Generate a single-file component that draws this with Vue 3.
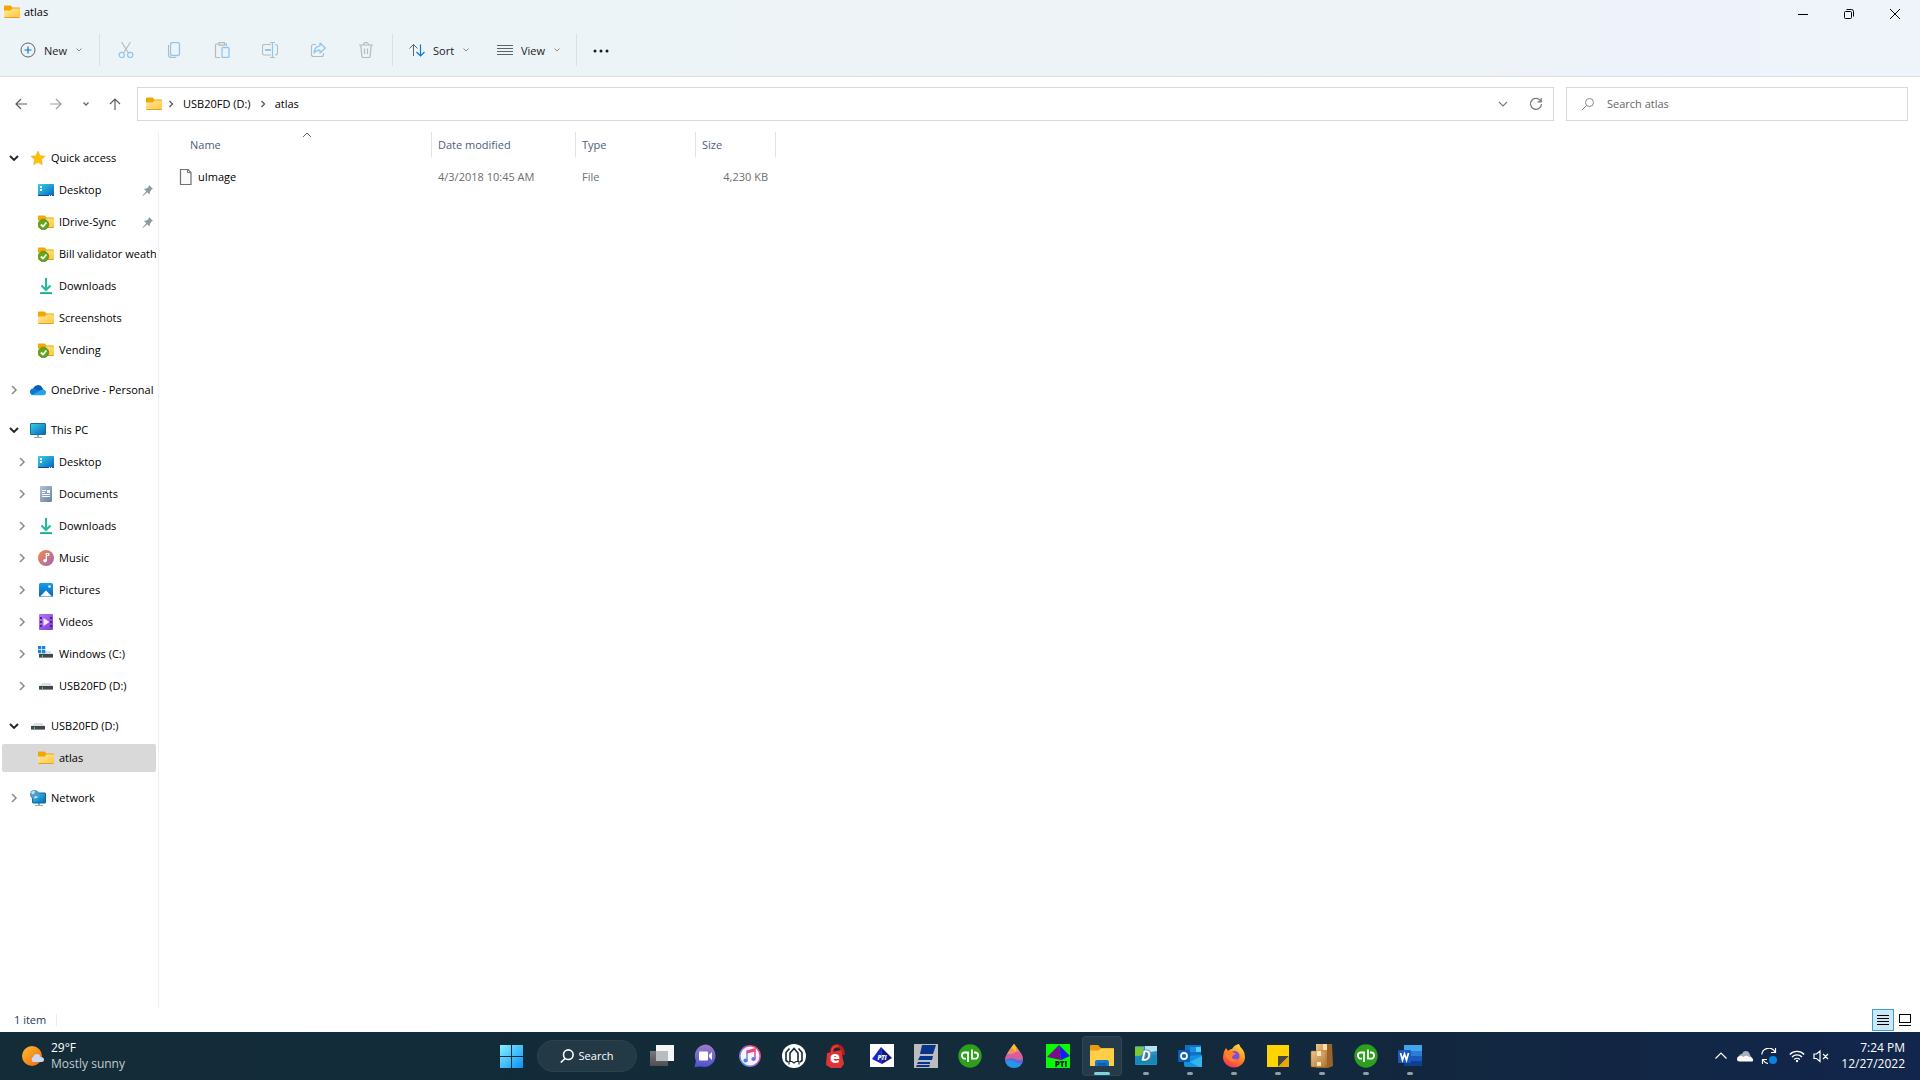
<script setup>
const quick = [
  { icon: 'desktop', label: 'Desktop', pinned: true },
  { icon: 'foldersync', label: 'IDrive-Sync', pinned: true },
  { icon: 'foldersync', label: 'Bill validator weath' },
  { icon: 'download', label: 'Downloads' },
  { icon: 'folder', label: 'Screenshots' },
  { icon: 'foldersync', label: 'Vending' },
]
const pc = [
  { icon: 'desktop', label: 'Desktop', arrow: true },
  { icon: 'document', label: 'Documents', arrow: true },
  { icon: 'download', label: 'Downloads', arrow: true },
  { icon: 'music', label: 'Music', arrow: true },
  { icon: 'picture', label: 'Pictures', arrow: true },
  { icon: 'video', label: 'Videos', arrow: true },
  { icon: 'windrive', label: 'Windows (C:)', arrow: true },
  { icon: 'drive', label: 'USB20FD (D:)', arrow: true },
]
const tree = [
  { icon: 'star', label: 'Quick access', open: true, children: quick },
  { icon: 'onedrive', label: 'OneDrive - Personal', children: [] },
  { icon: 'pc', label: 'This PC', open: true, children: pc },
  { icon: 'drive', label: 'USB20FD (D:)', open: true, children: [{ icon: 'folder', label: 'atlas', selected: true }] },
  { icon: 'network', label: 'Network', children: [] },
]
const actions = ['Cut', 'Copy', 'Paste', 'Rename', 'Share', 'Delete']
const files = [{ name: 'uImage', date: '4/3/2018 10:45 AM', type: 'File', size: '4,230 KB' }]
const apps = [
  { id: 'taskview', name: 'Task view' },
  { id: 'chat', name: 'Chat' },
  { id: 'itunes', name: 'iTunes' },
  { id: 'arch', name: 'Home' },
  { id: 'elock', name: 'Lock', mark: { text: 'e', x: 9, y: 19, size: 16, fill: '#fff' } },
  { id: 'ptiwhite', name: 'PTI', mark: { text: 'PTI', x: 12, y: 16, size: 6, fill: '#fff', italic: true } },
  { id: 'bars', name: 'Bars' },
  { id: 'qb', name: 'QuickBooks' },
  { id: 'paint', name: 'Paint' },
  { id: 'ptigreen', name: 'PTI tools', mark: { text: 'PTI', x: 15, y: 23, size: 8, fill: '#031a03' } },
  { id: 'explorer', name: 'File Explorer', active: true },
  { id: 'dapp', name: 'D', running: true, mark: { text: 'D', x: 12, y: 17, size: 15, fill: '#fff', italic: true, stroke: '#17566d' } },
  { id: 'outlook', name: 'Outlook', running: true },
  { id: 'firefox', name: 'Firefox', running: true },
  { id: 'sticky', name: 'Sticky Notes', running: true },
  { id: 'boxes', name: 'Packages', running: true },
  { id: 'qb', name: 'QuickBooks Desktop', running: true },
  { id: 'word', name: 'Word', running: true },
]
</script>

<template>
  <svg class="sprite" aria-hidden="true">
    <defs>
      <linearGradient id="gFolder" x1="0" y1="0" x2="1" y2="1"><stop offset="0" stop-color="#ffe9a6" /><stop offset="1" stop-color="#ffc636" /></linearGradient>
      <linearGradient id="gBlue" x1="0" y1="0" x2="1" y2="1"><stop offset="0" stop-color="#35d3e6" /><stop offset="1" stop-color="#0a62bd" /></linearGradient>
      <linearGradient id="gDoc" x1="0" y1="0" x2="1" y2="1"><stop offset="0" stop-color="#b3c3d6" /><stop offset="1" stop-color="#6483a4" /></linearGradient>
      <linearGradient id="gDown" x1="0" y1="0" x2="0" y2="1"><stop offset="0" stop-color="#35cd90" /><stop offset="1" stop-color="#0fa49f" /></linearGradient>
      <linearGradient id="gMusic" x1="0" y1="0" x2="1" y2="1"><stop offset="0" stop-color="#f58a45" /><stop offset="1" stop-color="#a860b8" /></linearGradient>
      <linearGradient id="gPic" x1="0" y1="0" x2="0" y2="1"><stop offset="0" stop-color="#1b9de8" /><stop offset="1" stop-color="#0566bd" /></linearGradient>
      <linearGradient id="gVid" x1="0" y1="0" x2="1" y2="1"><stop offset="0" stop-color="#b878f5" /><stop offset="1" stop-color="#7c3bd6" /></linearGradient>
      <linearGradient id="gWin" x1="0" y1="0" x2="1" y2="1"><stop offset="0" stop-color="#86f1ff" /><stop offset="1" stop-color="#0a90f5" /></linearGradient>
      <linearGradient id="gChat" x1="0" y1="0" x2="0" y2="1"><stop offset="0" stop-color="#a07bc6" /><stop offset="1" stop-color="#4c54d2" /></linearGradient>
      <linearGradient id="gTunes" x1="1" y1="0" x2="0" y2="1"><stop offset="0" stop-color="#f9405c" /><stop offset="0.5" stop-color="#b858d8" /><stop offset="1" stop-color="#35a9f5" /></linearGradient>
      <linearGradient id="gSun" x1="0" y1="0" x2="1" y2="1"><stop offset="0" stop-color="#f8c030" /><stop offset="1" stop-color="#f2640c" /></linearGradient>
      <linearGradient id="gFire" x1="0.8" y1="0" x2="0.3" y2="1"><stop offset="0" stop-color="#ffe443" /><stop offset="0.5" stop-color="#ff8a1f" /><stop offset="1" stop-color="#f5305e" /></linearGradient>
      <linearGradient id="gBox" x1="0" y1="0" x2="1" y2="1"><stop offset="0" stop-color="#eec28a" /><stop offset="1" stop-color="#b07a35" /></linearGradient>
      <linearGradient id="gPane" x1="0" y1="0" x2="0" y2="1"><stop offset="0" stop-color="#767879" /><stop offset="1" stop-color="#4d4f50" /></linearGradient>
    </defs>

    <symbol id="folder" viewBox="0 0 16 16"><path d="M0 2.500Q0 1.500 1 1.500h5.500l2 2H15q1 0 1 1V7H0z" fill="#f0a800" /><path d="M0 6.500h6.500l2-2H15.500q.5 0 .5.500v8q0 1-1 1H1q-1 0-1-1z" fill="url(#gFolder)" /><path d="M.5 13.500h15" stroke="#e3a021" /></symbol>
    <symbol id="foldersync" viewBox="0 0 16 16"><use href="#folder" width="16" height="16" /><circle cx="5.500" cy="10.500" r="5.200" fill="#63a51e" stroke="#467f14" stroke-width=".6" /><path d="M2.800 10.500l2.200 2 3.400-4" fill="none" stroke="#fff" stroke-width="1.700" /></symbol>
    <symbol id="desktop" viewBox="0 0 16 16"><rect y="2" width="16" height="12" rx="1" fill="url(#gBlue)" /><path d="M0 13h16q0 1-1 1H1q-1 0-1-1z" fill="#0b4a92" /><path d="M2 4h2v2H2zM2 7h2v2H2z" fill="#fff" /><path d="M11 13h1v1h-1zM13 13h1v1h-1z" fill="#d8ecff" /></symbol>
    <symbol id="download" viewBox="0 0 16 16"><path d="M8 0v11.500M3.500 7.500L8 12l4.500-4.500" fill="none" stroke="#22b996" stroke-width="2" /><rect x="2" y="14" width="12" height="2" rx=".5" fill="url(#gDown)" /></symbol>
    <symbol id="star" viewBox="0 0 16 16"><path d="M8 1l2.100 4.700 5 .5-3.700 3.400 1 5.200L8 12.300l-4.400 2.500 1-5.200L.9 6.200l5-.5z" fill="#fcbf05" stroke="#f3a70a" stroke-width=".5" /></symbol>
    <symbol id="onedrive" viewBox="0 0 16 16"><path d="M3 7.500A5 5 0 0 1 12.500 6L14 9 5 11z" fill="#0a5cb0" /><path d="M0 10.200a3.500 3.500 0 0 1 5.500-3.200L13 10l-3 3H3.500A3 3 0 0 1 0 10.200z" fill="#0d78d2" /><path d="M2 12.900L11 8.100a3 3 0 0 1 5 2.400q0 2.500-3 2.700H3.500z" fill="#26a3ec" /></symbol>
    <symbol id="pc" viewBox="0 0 16 16"><path d="M7 13h2v2h3v1H4v-1h3z" fill="#9aa6b0" /><rect x=".5" y="1.500" width="15" height="11" rx=".5" fill="url(#gBlue)" stroke="#127099" /></symbol>
    <symbol id="document" viewBox="0 0 16 16"><rect x="2" width="12" height="16" rx="1" fill="url(#gDoc)" /><path d="M4 4.500h4M4 6.500h3M4 8.500h8M4 10.500h8" stroke="#fff" /><path d="M9 4h3v3H9z" fill="#fff" /></symbol>
    <symbol id="music" viewBox="0 0 16 16"><circle cx="8" cy="8" r="8" fill="url(#gMusic)" /><circle cx="7" cy="10.800" r="1.800" fill="#fff" /><path d="M8.300 11V3.500h2.400v2H8.300" fill="none" stroke="#fff" stroke-width="1.200" /></symbol>
    <symbol id="picture" viewBox="0 0 16 16"><rect x="1" y="1" width="14" height="14" rx="1.500" fill="url(#gPic)" /><path d="M2 14.500l6-6 6 6z" fill="#fff" /><circle cx="11.500" cy="4.500" r="1.300" fill="#fff" /></symbol>
    <symbol id="video" viewBox="0 0 16 16"><rect x="1" width="14" height="16" rx="1" fill="url(#gVid)" /><path d="M3 1v14M13 1v14" stroke="#4b238d" stroke-width="2" stroke-dasharray="2 2" stroke-dashoffset="-2" /><path d="M5.500 4l6 4-6 4z" fill="#f3eaff" /></symbol>
    <symbol id="drive" viewBox="0 0 16 16"><path d="M4 5h8l3 3.500H1z" fill="#dfe1e5" /><rect x="1" y="8" width="14" height="4" fill="#43474b" /><path d="M1 11.500h14" stroke="#8b8f93" /><path d="M4 9h1v2H4z" fill="#35e06a" /></symbol>
    <symbol id="windrive" viewBox="0 0 16 16"><path d="M8 5h4l3 3.500H1z" fill="#dfe1e5" /><rect x="1" y="8" width="14" height="4" fill="#43474b" /><path d="M1 11.500h14" stroke="#8b8f93" /><path d="M4 9h1v2H4z" fill="#35e06a" /><path d="M0 0h3.300v3.300H0zM4 0h3.300v3.300H4zM0 4h3.300v3.300H0zM4 4h3.300v3.300H4z" fill="#1683d8" /></symbol>
    <symbol id="network" viewBox="0 0 16 16"><path d="M8 13h2v2h3v1H5v-1h3z" fill="#9aa6b0" /><rect x="2.500" y="3" width="13" height="10" rx=".5" fill="url(#gBlue)" stroke="#0e6796" /><circle cx="4.500" cy="4.500" r="4.500" fill="#4f9cc4" /><path d="M1 3q2-3 4-2 0 3-2.500 3.500zM4 7q2-2 4 0-2 2-4 1z" fill="#b9e0ee" /></symbol>
    <symbol id="file" viewBox="0 0 16 18"><path d="M1.500 1.500h7.500l3 3v12H1.500z" fill="#fafafa" stroke="#70706e" stroke-width="1.200" /><path d="M8.500 1.500v3.200H12" fill="none" stroke="#70706e" /></symbol>
    <symbol id="pin" viewBox="0 0 12 12"><path d="M7 1l4 4-1.500.5L8 8l-.5 2.500-2.300-2.300L1 12l-.5-.5 3.700-4.200L2 5l2.500-.5L6.500 3z" fill="#8e99a6" /></symbol>

    <symbol id="Cut" viewBox="0 0 16 16"><path d="M3.500 0l7 11M12.500 0l-7 11" fill="none" stroke="#b4babd" stroke-width="1.100" /><circle cx="3.800" cy="13" r="2.600" fill="none" stroke="#92c6ec" stroke-width="1.300" /><circle cx="12.200" cy="13" r="2.600" fill="none" stroke="#92c6ec" stroke-width="1.300" /></symbol>
    <symbol id="Copy" viewBox="0 0 16 16"><path d="M2.500 3v9.500q0 3 3 3H10" fill="none" stroke="#b4babd" stroke-width="1.100" /><rect x="4.500" y=".5" width="9" height="13" rx="2" fill="none" stroke="#92c6ec" stroke-width="1.300" /></symbol>
    <symbol id="Paste" viewBox="0 0 16 16"><path d="M5 2H2.500Q1.500 2 1.500 3v11.500q0 1 1 1H6M10 2h2.500v2M5 .7h5.500v2.500H5z" fill="none" stroke="#b4babd" stroke-width="1.200" /><rect x="8" y="5.500" width="7" height="10" rx="1" fill="none" stroke="#92c6ec" stroke-width="1.300" /></symbol>
    <symbol id="Rename" viewBox="0 0 16 16"><path d="M9 2.500H2q-1.500 0-1.500 1.500v7.500q0 1.500 1.500 1.500h7M13 2.500q2.500 0 2.500 1.500v7.500q0 1.500-2.500 1.500" fill="none" stroke="#b4babd" stroke-width="1.100" /><path d="M8 .5h5M8 15.500h5M10.500.5v15" fill="none" stroke="#92c6ec" stroke-width="1.200" /><path d="M3 8h6" stroke="#92c6ec" stroke-width="2" /></symbol>
    <symbol id="Share" viewBox="0 0 16 16"><path d="M6 2.500H3.500q-2 0-2 2v8q0 2 2 2h8q2 0 2-2V11" fill="none" stroke="#b4babd" stroke-width="1.100" /><path d="M10 1l5.300 5L10 11V8.300Q6 8 4 11q.4-6.500 6-7.200z" fill="none" stroke="#92c6ec" stroke-width="1.300" stroke-linejoin="round" /></symbol>
    <symbol id="Delete" viewBox="0 0 16 16"><path d="M1 3h14M5.500 3q0-2.500 2.500-2.500T10.500 3M2.800 3l1 11q.1 1.500 1.500 1.500h5.400q1.400 0 1.500-1.500l1-11M6.500 6.500v5.500M9.500 6.500v5.500" fill="none" stroke="#b4babd" stroke-width="1.200" /></symbol>

    <symbol id="taskview" viewBox="0 0 24 24"><rect y="7" width="18" height="15" fill="url(#gPane)" /><rect x="6" y="1" width="18" height="16" fill="#f5f5f5" /><path d="M6 7h12v10H6z" fill="#b9bcbe" /></symbol>
    <symbol id="chat" viewBox="0 0 24 24"><path d="M12 .5A11.300 11.300 0 1 1 7 22.500L.5 23 2 17A11.400 11.400 0 0 1 12 .5z" fill="url(#gChat)" /><rect x="5" y="7.500" width="9" height="9" rx="1" fill="#fff" /><path d="M15 11l3-3v8l-3-3z" fill="#fff" /></symbol>
    <symbol id="itunes" viewBox="0 0 24 24"><circle cx="12" cy="12" r="10.200" fill="#f5f5fa" stroke="url(#gTunes)" stroke-width="1.500" /><path d="M9 16.500V7l8-2v10" fill="none" stroke="url(#gTunes)" stroke-width="1.500" /><path d="M9 7l8-2v2.500L9 9.500z" fill="#ec4a70" /><ellipse cx="7.600" cy="16.500" rx="2.200" ry="1.900" fill="#507fe8" /><ellipse cx="15.500" cy="15" rx="2.200" ry="1.900" fill="#6d70e8" /></symbol>
    <symbol id="arch" viewBox="0 0 24 24"><circle cx="12" cy="12" r="12" fill="#fff" /><path d="M7.500 4.500L4 8.500v8l2 1.500M16.500 4.500L20 8.500v8l-2 1.500M8 17.500V9l4-4.500L16 9v8.500" fill="none" stroke="#142c38" stroke-width="1.600" /><path d="M7 20.500v-3h3l2 1.500 2-1.500h3v3" fill="none" stroke="#142c38" stroke-width="1.200" /></symbol>
    <symbol id="elock" viewBox="0 0 24 24"><path d="M6 10V6q1-4.500 6-4T17 11" fill="none" stroke="#ba1c22" stroke-width="3.500" /><path d="M6 9V6q1-4 6-4" fill="none" stroke="#ee3b36" stroke-width="2" /><path d="M1 9l14-3 3 14-3 4H5L0 21z" fill="#dd3535" /></symbol>
    <symbol id="ptiwhite" viewBox="0 0 24 24"><path d="M0 0h24v23H0z" fill="#fff" /><path d="M11 3L2 15l10 5z" fill="#1825c8" /><path d="M11 3l11 11-10 6z" fill="#10167f" /></symbol>
    <symbol id="bars" viewBox="0 0 24 24"><path d="M0 0h24v24H0z" fill="#bcbcbe" /><path d="M8 1h14l-3 9H6zM6 12h13l-1 4H4zM4 18h12v2H3zM3 21h13l-1 2H2z" fill="#08348a" /></symbol>
    <symbol id="qb" viewBox="0 0 24 24"><circle cx="12" cy="12" r="11.700" fill="#2ca01c" /><path d="M10 18V8.500H7a3.100 3.100 0 0 0 0 6.200h1M14 5.500v9.200h3a3.100 3.100 0 0 0 0-6.200h-1" fill="none" stroke="#fff" stroke-width="1.800" /></symbol>
    <symbol id="paint" viewBox="0 0 24 24"><path d="M12 0q-9 11-9 16a9 8 0 0 0 18 0Q21 11 12 0z" fill="#2596ea" /><path d="M12 0Q7 6 5 10l10 1 4-1Q17 6 12 0z" fill="#f78c63" /><path d="M12 0L9.500 3.500 14 8l.5-4.500z" fill="#ffc510" /><path d="M5 10Q3 13 3 16q7-3 11-1t7 0q0-3-2-6-3-3-7 0t-7 1z" fill="#e05a9c" /><path d="M3 16q6-3 10-.500t8-.5q0 2-1 4-4 1-8-1.500t-8 0z" fill="#6961d6" /></symbol>
    <symbol id="ptigreen" viewBox="0 0 24 24"><path d="M0 0h24v24H0z" fill="#08fb05" /><path d="M13 1L1 13l14 3z" fill="#7b0c8c" /><path d="M13 1l11 11-9 4z" fill="#1819ee" /></symbol>
    <symbol id="explorer" viewBox="0 0 24 24"><path d="M0 2q0-1 1-1h7l3 3h12q1 0 1 1v6H0z" fill="#e69c0c" /><path d="M0 6.500h8.500l2.500-2H24V22H0z" fill="#ffcf48" /><path d="M5 22v-4q0-2 2-2h10q2 0 2 2v4z" fill="#1576cb" /><path d="M7.500 19h9v2.500h-9z" fill="#0c5da9" /></symbol>
    <symbol id="dapp" viewBox="0 0 24 24"><rect x="1" y="2" width="22" height="19" rx="1" fill="#2d90c4" /><path d="M1 3h9v9H1z" fill="#79c735" /><path d="M11 2h12v5L11 9z" fill="#b5e1f3" /><path d="M1 13q8-3 22-2v9H1z" fill="#1589ba" /></symbol>
    <symbol id="outlook" viewBox="0 0 24 24"><path d="M7 1h16v11H7z" fill="#0f70c7" /><path d="M12 3h6v5h-6z" fill="#1b90df" /><path d="M18 3h5v5h-5z" fill="#51d1f9" /><path d="M6 12l18-1v12H8q-2 0-2-2z" fill="#1491df" /><path d="M24 12L12 18l9 5h3z" fill="#35b4ed" /><rect y="6" width="12" height="12" rx="1" fill="#075eb5" /><circle cx="6" cy="12" r="3" fill="none" stroke="#fff" stroke-width="1.800" /></symbol>
    <symbol id="firefox" viewBox="0 0 24 24"><path d="M17 0q1 3 4 6 2 3 2 7a11 10.500 0 0 1-22 0q0-5 3-9l2 3q2-2 4-2 2-4 7-5z" fill="url(#gFire)" /><circle cx="12.500" cy="12" r="5" fill="#814bdb" /><path d="M3 8q4-3 8 0l3 2q-4 1-4 4 2 2 6 1-5 6-10 0-3-3-3-7z" fill="#ff8126" /></symbol>
    <symbol id="sticky" viewBox="0 0 24 24"><path d="M1 1h22v22H1z" fill="#ffd400" /><path d="M12 12h11L12 23z" fill="#464646" /><path d="M23 12v11H12z" fill="#eaa900" /></symbol>
    <symbol id="boxes" viewBox="0 0 24 24"><path d="M6 0h16l1 22-5 2H6z" fill="#98642b" /><path d="M6 0h11v22H6z" fill="url(#gBox)" /><path d="M13 0h4v6h-4z" fill="#f7dfae" /><rect x="1" y="7" width="15" height="16" rx="1" fill="url(#gBox)" stroke="#a66e2b" stroke-width=".5" /><path d="M7 7h4v5H7zM7 18h4v4H7z" fill="#fae8bd" /></symbol>
    <symbol id="word" viewBox="0 0 24 24"><path d="M6 1h18v6H6z" fill="#41a5ee" /><path d="M6 7h18v5H6z" fill="#2b7cd3" /><path d="M6 12h18v5H6z" fill="#185abd" /><path d="M6 17h18v5H6z" fill="#103f91" /><rect y="6" width="13" height="13" rx="1" fill="#185abd" /><path d="M2.500 9l2 7 2-6 2 6 2-7" fill="none" stroke="#fff" stroke-width="1.700" /></symbol>
  </svg>

  <div class="window">
    <header class="chrome">
      <div class="titlebar">
        <div class="title"><svg class="i16"><use href="#folder" /></svg><span>atlas</span></div>
        <div class="winbtns">
          <button aria-label="Minimize"><svg width="12" height="12" viewBox="0 0 12 12"><path d="M1 6.500h10" stroke="#000" /></svg></button>
          <button aria-label="Restore"><svg width="12" height="12" viewBox="0 0 12 12" fill="none" stroke="#000"><rect x="1.500" y="3.500" width="7" height="7" rx="1" /><path d="M3.500 1.500h5q2 0 2 2v5" /></svg></button>
          <button aria-label="Close"><svg width="12" height="12" viewBox="0 0 12 12"><path d="M1 1l10 10M11 1L1 11" stroke="#000" /></svg></button>
        </div>
      </div>
      <div class="toolbar">
        <button class="cmd new"><svg class="i16" viewBox="0 0 16 16" fill="none"><circle cx="8" cy="8" r="7" stroke="#5f6366" /><path d="M8 4.500v7M4.500 8h7" stroke="#0a78d0" stroke-width="1.200" /></svg><span>New</span><svg class="chev" viewBox="0 0 8 8"><path d="M1.500 2.500L4 5l2.500-2.500" /></svg></button>
        <i class="sep"></i>
        <div class="actions">
          <button v-for="a in actions" :key="a" :aria-label="a" disabled><svg class="i16"><use :href="'#' + a" /></svg></button>
        </div>
        <i class="sep"></i>
        <button class="cmd sort"><svg class="i16" viewBox="0 0 16 16" fill="none"><path d="M4.500 14V2.500M.5 6.500l4-4 4 4" stroke="#5f6366" /><path d="M11.500 2.500V14M7.500 10l4 4 4-4" stroke="#0a78d0" stroke-width="1.200" /></svg><span>Sort</span><svg class="chev" viewBox="0 0 8 8"><path d="M1.500 2.500L4 5l2.500-2.500" /></svg></button>
        <button class="cmd view"><svg class="i16" viewBox="0 0 16 16"><path d="M0 3.500h16M0 6.500h16M0 9.500h16M0 12.500h16" stroke="#5f6366" /></svg><span>View</span><svg class="chev" viewBox="0 0 8 8"><path d="M1.500 2.500L4 5l2.500-2.500" /></svg></button>
        <i class="sep"></i>
        <button class="more" aria-label="See more"><svg class="i16" viewBox="0 0 16 16" fill="#1b1b1b"><circle cx="2" cy="9" r="1.500" /><circle cx="8" cy="9" r="1.500" /><circle cx="14" cy="9" r="1.500" /></svg></button>
      </div>
    </header>

    <nav class="navrow">
      <button class="nav" aria-label="Back"><svg class="i16" viewBox="0 0 16 16"><path d="M14 8H3M8 3L3 8l5 5" stroke="#5c5c5c" stroke-width="1.200" fill="none" /></svg></button>
      <button class="nav wide" aria-label="Forward"><svg class="i16" viewBox="0 0 16 16"><path d="M2 8h11M8 3l5 5-5 5" stroke="#a0a0a0" stroke-width="1.200" fill="none" /></svg></button>
      <button class="nav slim" aria-label="Recent locations"><svg width="8" height="8" viewBox="0 0 8 8"><path d="M1.500 2.500L4 5l2.500-2.500" stroke="#666" stroke-width="1.300" fill="none" /></svg></button>
      <button class="nav" aria-label="Up"><svg class="i16" viewBox="0 0 16 16"><path d="M8 14V3M3 8l5-5 5 5" stroke="#5c5c5c" stroke-width="1.200" fill="none" /></svg></button>
      <div class="address">
        <svg class="i16"><use href="#folder" /></svg>
        <svg class="crumb first" viewBox="0 0 8 8"><path d="M2.500 1L5.500 4 2.500 7" /></svg>
        <a href="#d">USB20FD (D:)</a>
        <svg class="crumb" viewBox="0 0 8 8"><path d="M2.500 1L5.500 4 2.500 7" /></svg>
        <a href="#atlas">atlas</a>
        <span class="grow"></span>
        <button class="abtn" aria-label="Previous locations"><svg width="10" height="10" viewBox="0 0 10 10"><path d="M1 3l4 4 4-4" stroke="#777" fill="none" stroke-width="1.100" /></svg></button>
        <button class="abtn" aria-label="Refresh"><svg width="14" height="14" viewBox="0 0 14 14"><path d="M12 4.500A5.500 5.500 0 1 0 12.500 7M12.200 1v3.800H8.500" stroke="#777" fill="none" stroke-width="1.200" /></svg></button>
      </div>
      <label class="search"><svg width="14" height="14" viewBox="0 0 14 14"><circle cx="8.500" cy="5.500" r="4" stroke="#888" fill="none" /><path d="M5.500 8.500L1 13" stroke="#888" /></svg><input type="text" placeholder="Search atlas" aria-label="Search atlas" /></label>
    </nav>

    <div class="body">
      <aside class="tree">
        <ul v-for="g in tree" :key="g.label">
          <li>
            <a href="#" class="node">
              <svg class="tw" :class="{ open: g.open }" viewBox="0 0 16 16"><path v-if="g.open" d="M4 6l4 4 4-4" /><path v-else d="M6 4l4 4-4 4" /></svg>
              <svg class="i16"><use :href="'#' + g.icon" /></svg><span>{{ g.label }}</span>
            </a>
          </li>
          <li v-for="c in g.children" :key="c.label">
            <a href="#" class="node child" :class="{ selected: c.selected }">
              <svg class="tw" viewBox="0 0 16 16"><path v-if="c.arrow" d="M6 4l4 4-4 4" /></svg>
              <svg class="i16"><use :href="'#' + c.icon" /></svg><span>{{ c.label }}</span>
              <svg v-if="c.pinned" class="pin"><use href="#pin" /></svg>
            </a>
          </li>
        </ul>
      </aside>
      <main class="files">
        <table>
          <colgroup><col class="c1" /><col class="c2" /><col class="c3" /><col class="c4" /></colgroup>
          <thead>
            <tr>
              <th class="name"><button>Name<svg class="caret" viewBox="0 0 10 6"><path d="M1 5l4-4 4 4" fill="none" stroke="#666" /></svg></button></th>
              <th><button>Date modified</button></th>
              <th><button>Type</button></th>
              <th><button>Size</button></th>
            </tr>
          </thead>
          <tbody>
            <tr v-for="f in files" :key="f.name">
              <td class="fname"><div><svg class="ficon"><use href="#file" /></svg>{{ f.name }}</div></td>
              <td>{{ f.date }}</td>
              <td>{{ f.type }}</td>
              <td class="num">{{ f.size }}</td>
            </tr>
          </tbody>
        </table>
      </main>
    </div>

    <footer class="status">
      <span class="count">1 item</span><i class="ssep"></i><span class="grow"></span>
      <button class="mode on" aria-label="Details view"><svg width="12" height="12" viewBox="0 0 12 12"><path d="M0 1.500h12M0 4.500h12M0 7.500h12M0 10.500h12" stroke="#000" /></svg></button>
      <button class="mode" aria-label="Large icons view"><svg width="12" height="12" viewBox="0 0 12 12"><rect x=".5" y=".5" width="11" height="8" fill="#fff" stroke="#000" /><path d="M0 11.500h12" stroke="#000" /></svg></button>
    </footer>

    <div class="taskbar">
      <button class="weather">
        <svg width="22" height="22" viewBox="0 0 22 22"><circle cx="10" cy="11" r="10" fill="url(#gSun)" /><path d="M11 17a3 3 0 0 1 0-5q1-3 4-3t3.500 3Q22 12 22 14.500T19.500 17z" fill="#cbd9f6" /></svg>
        <span class="wtext"><span>29°F</span><span class="sub">Mostly sunny</span></span>
      </button>
      <div class="apps">
        <button class="app" aria-label="Start"><svg class="i24" viewBox="0 0 24 24"><path d="M1 1h11v11H1zM13 1h11v11H13zM1 13h11v11H1zM13 13h11v11H13z" fill="url(#gWin)" /></svg></button>
        <button class="pill"><svg width="14" height="14" viewBox="0 0 14 14" fill="none" stroke="#fff" stroke-width="1.600"><circle cx="8.300" cy="5.700" r="4.800" /><path d="M5 9.500L.8 13.500" /></svg><span>Search</span></button>
        <button v-for="(a, i) in apps" :key="i" class="app" :class="{ active: a.active }" :aria-label="a.name">
          <svg class="i24" viewBox="0 0 24 24">
            <use :href="'#' + a.id" width="24" height="24" />
            <text v-if="a.mark" class="logo" :class="{ italic: a.mark.italic }" :x="a.mark.x" :y="a.mark.y" :font-size="a.mark.size" :fill="a.mark.fill" :stroke="a.mark.stroke" stroke-width=".6" text-anchor="middle">{{ a.mark.text }}</text>
          </svg>
          <i v-if="a.running || a.active" class="mark"></i>
        </button>
      </div>
      <div class="tray">
        <button aria-label="Show hidden icons"><svg class="i16" viewBox="0 0 16 16"><path d="M2.500 10.500L8 5l5.500 5.500" fill="none" stroke="#fff" stroke-width="1.200" /></svg></button>
        <button aria-label="OneDrive"><svg class="i16" viewBox="0 0 16 16"><path d="M2 9q0-3 3-3 1-3 4-3t4 4l2 3-8 2z" fill="#a9b0bb" /><path d="M0 11q0-3 3.500-3 2 0 3 1 2-2 4-1t2 1q3 0 3.500 2.500T13.500 13.500h-11Q0 13.500 0 11z" fill="#fff" /></svg></button>
        <button aria-label="Update"><svg class="i16" viewBox="0 0 16 16"><path d="M.8 6.500A7 7 0 0 1 14 4M14.500 0v4.500H10M1.500 16v-4.500H6M2 12q2 3 5 3.500" fill="none" stroke="#fff" stroke-width="1.200" /><circle cx="12" cy="12" r="4" fill="#0a84e3" /></svg></button>
        <span class="pair">
          <button aria-label="Wi-Fi"><svg class="i16" viewBox="0 0 16 16" fill="none" stroke="#fff" stroke-width="1.300"><path d="M.8 6.500a10 10 0 0 1 14.400 0M3 9a7 7 0 0 1 10 0M5.200 11.500a4 4 0 0 1 5.600 0" /><circle cx="8" cy="13" r="1.200" fill="#fff" stroke="none" /></svg></button>
          <button aria-label="Volume muted"><svg class="i16" viewBox="0 0 16 16" fill="none" stroke="#fff" stroke-width="1.200"><path d="M1 6v4.500h2.500L7 13.500V3L3.500 6zM10 6l5 5M15 6l-5 5" /></svg></button>
        </span>
        <button class="clock"><span>7:24 PM</span><span>12/27/2022</span></button>
      </div>
    </div>
  </div>
</template>

<style>
body { margin: 0; background: #fff; }
</style>

<style scoped>
* { box-sizing: border-box; }
.sprite { position: absolute; width: 0; height: 0; }
.window { min-height: 100vh; display: flex; flex-direction: column; font-family: "Open Sans", "Noto Sans", sans-serif; font-size: 11px; line-height: 16px; color: #000; background: #fff; }
button { font: inherit; color: inherit; background: none; border: 0; padding: 0; margin: 0; }
a { color: inherit; text-decoration: none; }
svg { display: block; flex: none; }
.i16 { width: 16px; height: 16px; }
.i24 { width: 24px; height: 24px; }
.grow { flex: 1; }

.chrome { background: linear-gradient(90deg, #ecf4f8 0%, #eef3f7 76%, #eef2fa 84%, #eff3fa 100%); border-bottom: 1px solid #d7dfe3; }
.titlebar { height: 28px; display: flex; justify-content: space-between; align-items: flex-start; }
.title { height: 24px; padding-left: 4px; display: flex; align-items: center; gap: 4px; }
.winbtns { display: flex; padding-right: 2px; }
.winbtns button { width: 46px; height: 28px; display: flex; align-items: center; justify-content: center; }
.toolbar { height: 48px; padding-bottom: 4px; display: flex; align-items: center; color: #1b1b1b; }
.sep { width: 1px; height: 32px; background: #d9e1e5; }
.cmd { height: 32px; display: flex; align-items: center; gap: 8px; padding-right: 16px; }
.cmd span { padding-top: 1px; }
.new { width: 99px; padding-left: 20px; }
.sort { width: 92px; padding-left: 16px; }
.view { width: 91px; padding-left: 12px; }
.chev { width: 8px; height: 8px; margin-left: auto; fill: none; stroke: #85898c; }
.actions { display: flex; padding: 0 2px; }
.actions button, .more { width: 48px; height: 32px; display: flex; align-items: center; justify-content: center; }

.navrow { height: 55px; padding: 10px 12px 11px 4px; display: flex; align-items: center; }
.nav { width: 34px; height: 34px; display: flex; align-items: center; justify-content: center; }
.nav.wide { width: 36px; }
.nav.slim { width: 24px; }
.address { flex: 1; height: 34px; margin-left: 5px; padding: 0 1px 0 8px; border: 1px solid #d9d9d9; display: flex; align-items: center; }
.crumb { width: 8px; height: 8px; margin: 0 8px; fill: none; stroke: #555; stroke-width: 1.3; }
.crumb.first { margin-left: 5px; }
.abtn { width: 33px; height: 32px; display: flex; align-items: center; justify-content: center; }
.search { width: 342px; height: 34px; margin-left: 12px; padding-left: 14px; border: 1px solid #d9d9d9; display: flex; align-items: center; gap: 12px; }
.search input { flex: 1; min-width: 0; border: 0; outline: 0; padding: 0; background: none; font: inherit; color: #666; }
.search input::placeholder { color: #666; opacity: 1; }

.body { flex: 1; display: flex; }
.tree { width: 159px; padding: 10px 2px 0 2px; border-right: 1px solid #f0f0f0; }
.tree ul { list-style: none; margin: 0 0 8px; padding: 0; }
.tree li { padding: 2px 0; }
.node { height: 28px; padding-left: 4px; display: flex; align-items: center; overflow: hidden; white-space: nowrap; border-radius: 2px; }
.node.child { padding-left: 12px; }
.node.selected { background: #d9d9d9; }
.node .tw { width: 16px; height: 16px; margin-right: 8px; fill: none; stroke: #8a8a8a; stroke-width: 1.5; }
.node .tw.open { stroke: #222; stroke-width: 1.8; }
.node span { margin-left: 5px; }
.pin { width: 12px; height: 12px; margin: 0 2px 0 auto; }

.files { flex: 1; padding-left: 16px; }
table { table-layout: fixed; width: 601px; border-collapse: separate; border-spacing: 0; }
.c1 { width: 257px; }
.c2 { width: 144px; }
.c3 { width: 120px; }
.c4 { width: 80px; }
th { height: 25px; padding: 0; border-right: 1px solid #e2e2e2; font-weight: 400; color: #4c607a; }
th.name { padding-left: 8px; }
th button { position: relative; display: block; width: 100%; height: 25px; padding: 0 6px; text-align: left; }
th.name button { padding-left: 7px; }
.caret { position: absolute; top: 0; left: 50%; width: 10px; height: 6px; margin-left: -5px; }
td { height: 40px; padding: 0 8px 0 6px; color: #6d6d6d; }
td.fname { padding-left: 4px; color: #000; }
.fname div { display: flex; align-items: center; gap: 3px; }
.ficon { width: 16px; height: 18px; }
.num { text-align: right; }

.status { height: 24px; padding: 0 4px 0 14px; display: flex; align-items: center; color: #1e395b; }
.ssep { width: 1px; height: 12px; margin-left: 10px; background: #ececec; }
.mode { width: 22px; height: 22px; display: flex; align-items: center; justify-content: center; }
.mode.on { background: #cce8f6; border: 1px solid #3aa0d1; }

.taskbar { height: 48px; display: grid; grid-template-columns: 1fr auto 1fr; align-items: center; background: linear-gradient(90deg, #132c38 0%, #132b3a 55%, #12273f 75%, #12254c 100%); color: #fff; }
.weather { display: flex; align-items: center; gap: 7px; padding-left: 22px; text-align: left; }
.wtext, .clock { display: flex; flex-direction: column; font-size: 12px; }
.sub { color: #c2cace; }
.apps { display: flex; align-items: center; }
.app { position: relative; width: 44px; height: 48px; display: flex; align-items: center; justify-content: center; }
.app.active::before { content: ""; position: absolute; inset: 4px 2px; border-radius: 4px; background: rgba(255, 255, 255, .08); border: 1px solid rgba(255, 255, 255, .06); }
.app svg { position: relative; }
.logo { font-family: "Open Sans", sans-serif; font-weight: 800; }
.logo.italic { font-style: italic; }
.mark { position: absolute; bottom: 5px; left: 50%; width: 6px; height: 3px; margin-left: -3px; border-radius: 2px; background: #959da5; }
.active .mark { width: 16px; margin-left: -8px; background: #7bd3dc; }
.pill { width: 100px; height: 32px; margin: 0 3px 0 4px; border-radius: 16px; background: #233a46; border: 1px solid #2b424e; display: flex; align-items: center; justify-content: center; gap: 5px; }
.tray { display: flex; align-items: center; justify-content: flex-end; gap: 8px; padding-right: 15px; }
.pair { display: flex; gap: 8px; margin-left: 4px; }
.clock { margin-left: 4px; text-align: right; }
</style>
